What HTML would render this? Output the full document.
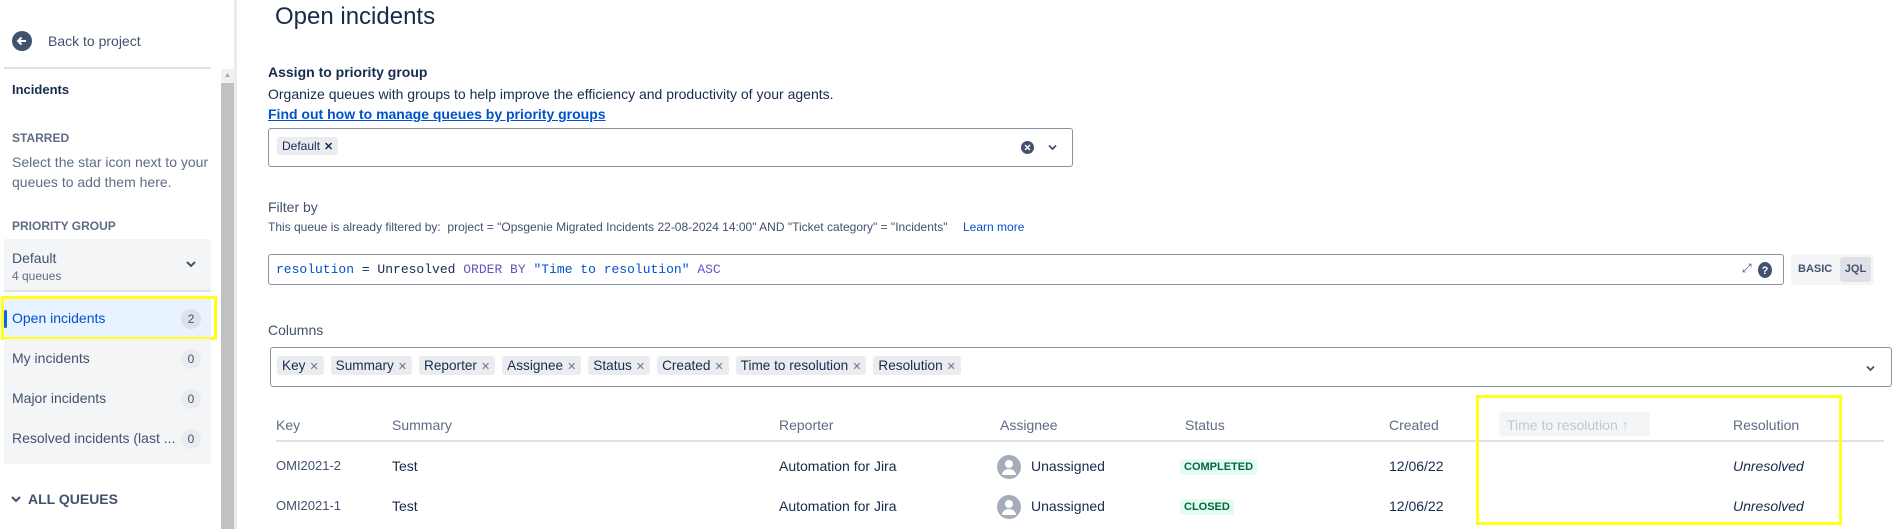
<!DOCTYPE html>
<html><head><meta charset="utf-8"><style>
*{box-sizing:border-box;margin:0;padding:0}
body{width:1894px;height:529px;overflow:hidden;background:#fff;font-family:"Liberation Sans",sans-serif;color:#172b4d;position:relative;font-size:14px}
.a{position:absolute;white-space:nowrap}
.side{position:absolute;left:0;top:0;width:237px;height:529px;border-right:3px solid #ebecf0}
.muted{color:#5e6c84}
.q{position:absolute;left:4px;width:207px;height:40px;background:#f4f5f7}
.q span{position:absolute;left:8px;top:11px;color:#42526e}
.q b{position:absolute;right:10px;top:10px;width:20px;height:20px;border-radius:10px;background:#ebecf0;font-weight:normal;font-size:12px;text-align:center;line-height:20px;color:#42526e}
.tag{display:inline-block;background:#ebecf0;border-radius:3px;padding:2px 5px;font-size:13.6px;margin-right:7px;color:#172b4d}
.tag i{font-style:normal;color:#6b778c;font-size:11px;margin-left:4px}
.box{position:absolute;border:1px solid #8993a4;border-radius:3px}
.th{position:absolute;top:417px;color:#5e6c84}
.c1{top:458px}.c2{top:498px}
.lz{position:absolute;border-radius:3px;font-size:11px;font-weight:bold;padding:2px 4px;background:#e3fcef;color:#006644}
</style></head><body>
<div class="side">
 <svg class="a" style="left:12px;top:31px" width="20" height="20"><circle cx="10" cy="10" r="10" fill="#42526e"/><path d="M14 10H6M9.5 6.5L6 10l3.5 3.5" stroke="#fff" stroke-width="2" fill="none"/></svg>
 <div class="a" style="left:48px;top:33px;color:#42526e">Back to project</div>
 <div class="a" style="left:4px;top:67px;width:207px;height:2px;background:#dfe1e6"></div>
 <div class="a" style="left:221px;top:69px;width:13px;height:460px;background:#c1c1c1"></div>
 <div class="a" style="left:221px;top:69px;width:13px;height:14px;background:#f1f1f1;font-size:7px;color:#a3a3a3;text-align:center;line-height:14px">▲</div>
 <div class="a" style="left:12px;top:82px;font-weight:bold;font-size:13px">Incidents</div>
 <div class="a muted" style="left:12px;top:131px;font-size:12px;font-weight:bold">STARRED</div>
 <div class="a muted" style="left:12px;top:152px;line-height:20px">Select the star icon next to your<br>queues to add them here.</div>
 <div class="a muted" style="left:12px;top:219px;font-size:12px;font-weight:bold">PRIORITY GROUP</div>
 <div class="a" style="left:4px;top:239px;width:207px;height:53px;background:#f4f5f7;border-bottom:2px solid #dfe1e6"></div>
 <div class="a" style="left:12px;top:250px;color:#42526e">Default</div>
 <div class="a muted" style="left:12px;top:269px;font-size:12px">4 queues</div>
 <svg class="a" style="left:186px;top:260px" width="10" height="8"><path d="M1 2l4 4 4-4" stroke="#42526e" stroke-width="2" fill="none"/></svg>
 <div class="q" style="top:299px;background:#e9f2ff"><span style="color:#0052cc">Open incidents</span><b style="background:#dfe1e6">2</b></div>
 <div class="a" style="left:4px;top:310px;width:3px;height:18px;background:#0c66e4;border-radius:2px"></div>
 <div class="a" style="left:1px;top:296px;width:216px;height:44px;border:3px solid #ffff1a"></div>
 <div class="q" style="top:339px"><span>My incidents</span><b>0</b></div>
 <div class="q" style="top:379px"><span>Major incidents</span><b>0</b></div>
 <div class="q" style="top:419px;height:45px"><span>Resolved incidents (last ...</span><b>0</b></div>
 <svg class="a" style="left:11px;top:495px" width="10" height="8"><path d="M1 2l4 4 4-4" stroke="#42526e" stroke-width="2" fill="none"/></svg>
 <div class="a" style="left:28px;top:491px;font-weight:bold;font-size:14px;color:#42526e">ALL QUEUES</div>
</div>

<div class="a" style="left:275px;top:3px;font-size:24px;color:#172b4d">Open incidents</div>
<div class="a" style="left:268px;top:64px;font-weight:bold;font-size:14px">Assign to priority group</div>
<div class="a" style="left:268px;top:86px;font-size:14px">Organize queues with groups to help improve the efficiency and productivity of your agents.</div>
<div class="a" style="left:268px;top:106px;font-size:14px;color:#0052cc;text-decoration:underline;font-weight:bold">Find out how to manage queues by priority groups</div>
<div class="box" style="left:268px;top:128px;width:805px;height:39px"></div>
<div class="a tag" style="left:277px;top:137px;font-size:12px">Default<i style="color:#172b4d;font-weight:bold">✕</i></div>
<svg class="a" style="left:1021px;top:141px" width="13" height="13"><circle cx="6.5" cy="6.5" r="6.5" fill="#42526e"/><path d="M4 4l5 5M9 4l-5 5" stroke="#fff" stroke-width="1.5"/></svg>
<svg class="a" style="left:1048px;top:144px" width="9" height="7"><path d="M1 1.5l3.5 3.5 3.5-3.5" stroke="#42526e" stroke-width="1.8" fill="none"/></svg>

<div class="a muted" style="left:268px;top:199px;color:#42526e">Filter by</div>
<div class="a muted" style="left:268px;top:220px;font-size:12px;color:#42526e">This queue is already filtered by:&nbsp; project = "Opsgenie Migrated Incidents 22-08-2024 14:00" AND "Ticket category" = "Incidents"</div>
<div class="a" style="left:963px;top:220px;font-size:12px;color:#0052cc">Learn more</div>
<div class="box" style="left:268px;top:254px;width:1516px;height:31px"></div>
<div class="a" style="left:276px;top:262px;font-family:'Liberation Mono',monospace;font-size:13px"><span style="color:#0052cc">resolution</span> = <span style="color:#172b4d">Unresolved</span> <span style="color:#6554c0">ORDER BY</span> <span style="color:#0052cc">"Time to resolution"</span> <span style="color:#6554c0">ASC</span></div>
<div class="a" style="left:1742px;top:261px;font-size:12px;color:#42526e">⤢</div>
<svg class="a" style="left:1758px;top:262px" width="14" height="16"><ellipse cx="7" cy="8" rx="7" ry="8" fill="#42526e"/><text x="7" y="12" font-size="11" font-weight="bold" fill="#fff" text-anchor="middle" font-family="Liberation Sans">?</text></svg>
<div class="a" style="left:1791px;top:254px;width:83px;height:31px;background:#f4f5f7;border-radius:3px"></div>
<div class="a" style="left:1798px;top:263px;font-size:11px;font-weight:bold;color:#42526e">BASIC</div>
<div class="a" style="left:1840px;top:257px;width:31px;height:25px;background:#dfe1e6;border-radius:3px;font-size:11px;font-weight:bold;color:#42526e;text-align:center;line-height:25px">JQL</div>

<div class="a" style="left:268px;top:322px;color:#42526e">Columns</div>
<div class="box" style="left:270px;top:347px;width:1622px;height:40px"></div>
<div class="a" style="left:277px;top:356px"><span class="tag">Key<i>✕</i></span><span class="tag">Summary<i>✕</i></span><span class="tag">Reporter<i>✕</i></span><span class="tag">Assignee<i>✕</i></span><span class="tag">Status<i>✕</i></span><span class="tag">Created<i>✕</i></span><span class="tag">Time to resolution<i>✕</i></span><span class="tag">Resolution<i>✕</i></span></div>
<svg class="a" style="left:1866px;top:365px" width="9" height="7"><path d="M1 1.5l3.5 3.5 3.5-3.5" stroke="#42526e" stroke-width="1.8" fill="none"/></svg>

<div class="th" style="left:276px">Key</div>
<div class="th" style="left:392px">Summary</div>
<div class="th" style="left:779px">Reporter</div>
<div class="th" style="left:1000px">Assignee</div>
<div class="th" style="left:1185px">Status</div>
<div class="th" style="left:1389px">Created</div>
<div class="a" style="left:1499px;top:412px;width:151px;height:24px;background:#f4f5f7;border-radius:3px"></div>
<div class="th" style="left:1507px;color:#c1c7d0">Time to resolution ↑</div>
<div class="th" style="left:1733px">Resolution</div>
<div class="a" style="left:276px;top:440px;width:1608px;height:2px;background:#dfe1e6"></div>

<div class="a c1" style="left:276px;font-size:13px;color:#42526e">OMI2021-2</div>
<div class="a c2" style="left:276px;font-size:13px;color:#42526e">OMI2021-1</div>
<div class="a c1" style="left:392px">Test</div><div class="a c2" style="left:392px">Test</div>
<div class="a c1" style="left:779px">Automation for Jira</div><div class="a c2" style="left:779px">Automation for Jira</div>
<svg class="a" style="left:997px;top:455px" width="24" height="24"><circle cx="12" cy="12" r="12" fill="#a5adba"/><circle cx="12" cy="9" r="4" fill="#fff"/><path d="M5 20a7 6 0 0 1 14 0z" fill="#fff"/></svg>
<svg class="a" style="left:997px;top:495px" width="24" height="24"><circle cx="12" cy="12" r="12" fill="#a5adba"/><circle cx="12" cy="9" r="4" fill="#fff"/><path d="M5 20a7 6 0 0 1 14 0z" fill="#fff"/></svg>
<div class="a c1" style="left:1031px">Unassigned</div><div class="a c2" style="left:1031px">Unassigned</div>
<div class="lz" style="left:1180px;top:459px">COMPLETED</div>
<div class="lz" style="left:1180px;top:499px">CLOSED</div>
<div class="a c1" style="left:1389px">12/06/22</div><div class="a c2" style="left:1389px">12/06/22</div>
<div class="a c1" style="left:1733px;font-style:italic">Unresolved</div><div class="a c2" style="left:1733px;font-style:italic">Unresolved</div>
<div class="a" style="left:1476px;top:395px;width:366px;height:130px;border:3px solid #ffff1a"></div>
</body></html>
